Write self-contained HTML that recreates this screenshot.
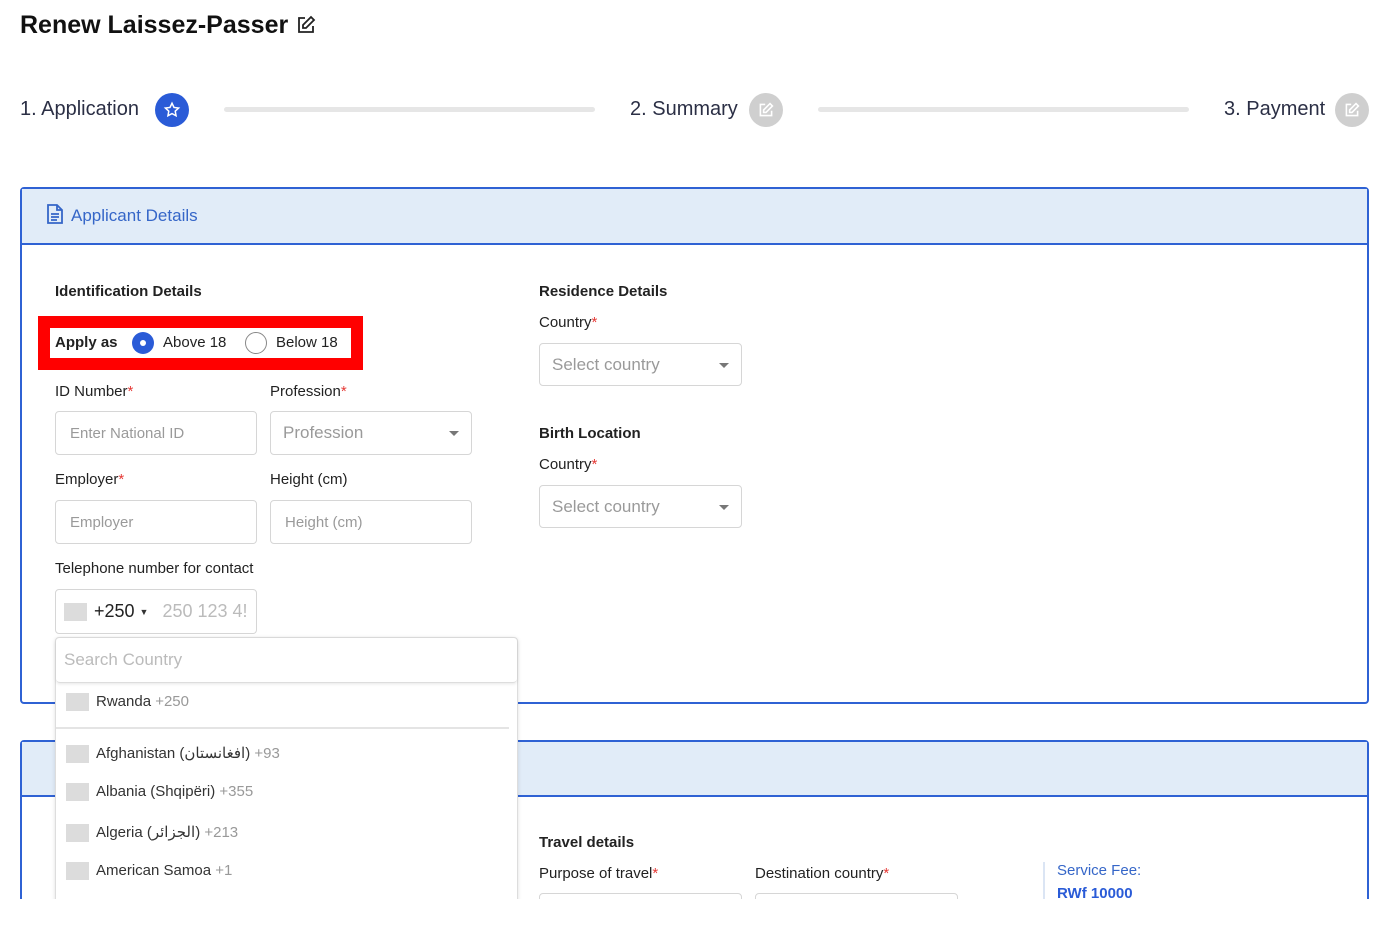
<!DOCTYPE html>
<html><head><meta charset="utf-8"><style>
*{box-sizing:border-box;margin:0;padding:0}
html,body{width:1387px;height:938px;overflow:hidden}
body{background:#fff;font-family:"Liberation Sans","Noto Sans CJK SC",sans-serif;color:#222;position:relative}
.a{position:absolute;white-space:nowrap}
.lbl{font-size:15px;color:#222}
.req{color:#e53935}
.inp{position:absolute;border:1px solid #d6d6d6;border-radius:4px;background:#fff;font-size:15px;color:#9a9a9a;padding-left:14px;display:flex;align-items:center}
.sel{font-size:17px;padding-left:12px}
.caret{position:absolute;right:12px;top:50%;margin-top:-2px;border-left:5px solid transparent;border-right:5px solid transparent;border-top:5px solid #777}
.circ{position:absolute;width:34px;height:34px;border-radius:50%;display:flex;align-items:center;justify-content:center}
.step{font-size:20px;color:#2b2f45}
.line{position:absolute;height:5px;background:#e6e6e6;border-radius:3px;top:107px}
.card{position:absolute;left:20px;width:1349px;border:2px solid #2f62d4;border-radius:4px;background:#fff}
.hdr{background:#e1ecf8;border-bottom:2px solid #2f62d4}
.flag{display:inline-block;width:23px;height:18px;background:#dcdcdc;vertical-align:middle;margin-right:7px}
.row{position:absolute;left:66px;font-size:15px;color:#333}
.row span{color:#999}
.b{font-weight:bold;font-size:15px}
</style></head><body>
<div class="a" style="left:20px;top:11px;font-size:25px;font-weight:bold;color:#111">Renew Laissez-Passer</div>
<svg class="a" style="left:296px;top:15px" width="20" height="20" viewBox="0 0 20 20" fill="none" stroke="#222" stroke-width="1.8"><path d="M9 3H3v14h14v-6"/><path d="M15 2l3 3-8 8H7v-3z"/></svg>

<div class="a step" style="left:20px;top:98px">1. Application</div>
<div class="circ" style="left:155px;top:93px;background:#2a5bd7"><svg width="18" height="18" viewBox="0 0 24 24" fill="none" stroke="#fff" stroke-width="2"><path d="M12 3l2.7 5.6 6.1.8-4.5 4.2 1.1 6.1L12 16.8 6.6 19.7l1.1-6.1L3.2 9.4l6.1-.8z"/></svg></div>
<div class="line" style="left:224px;width:371px"></div>
<div class="a step" style="left:630px;top:98px">2. Summary</div>
<div class="circ" style="left:749px;top:93px;background:#cfcfcf"><svg width="16" height="16" viewBox="0 0 20 20" fill="none" stroke="#fff" stroke-width="2"><path d="M9 3H3v14h14v-6"/><path d="M15 2l3 3-8 8H7v-3z"/></svg></div>
<div class="line" style="left:818px;width:371px"></div>
<div class="a step" style="left:1224px;top:98px">3. Payment</div>
<div class="circ" style="left:1335px;top:93px;background:#cfcfcf"><svg width="16" height="16" viewBox="0 0 20 20" fill="none" stroke="#fff" stroke-width="2"><path d="M9 3H3v14h14v-6"/><path d="M15 2l3 3-8 8H7v-3z"/></svg></div>

<div class="card" style="top:187px;height:517px">
 <div class="hdr" style="height:56px"></div>
</div>
<svg class="a" style="left:46px;top:204px" width="18" height="20" viewBox="0 0 18 20" fill="none" stroke="#3566c8" stroke-width="1.8"><path d="M2 1h9l5 5v13H2z"/><path d="M11 1v5h5M5 10h8M5 13h8M5 16h6"/></svg>
<div class="a" style="left:71px;top:206px;font-size:17px;color:#3566c8">Applicant Details</div>

<div class="a b" style="left:55px;top:283px">Identification Details</div>
<div class="a" style="left:38px;top:316px;width:325px;height:54px;background:#f00"></div>
<div class="a" style="left:50px;top:328px;width:301px;height:30px;background:#fff"></div>
<div class="a b" style="left:55px;top:334px">Apply as</div>
<div class="a" style="left:132px;top:332px;width:22px;height:22px;border-radius:50%;background:#2a5bd7"><div style="margin:8px;width:6px;height:6px;border-radius:50%;background:#fff"></div></div>
<div class="a lbl" style="left:163px;top:334px">Above 18</div>
<div class="a" style="left:245px;top:332px;width:22px;height:22px;border-radius:50%;border:1px solid #888"></div>
<div class="a lbl" style="left:276px;top:334px">Below 18</div>

<div class="a lbl" style="left:55px;top:383px">ID Number<span class="req">*</span></div>
<div class="a lbl" style="left:270px;top:383px">Profession<span class="req">*</span></div>
<div class="inp" style="left:55px;top:411px;width:202px;height:44px">Enter National ID</div>
<div class="inp sel" style="left:270px;top:411px;width:202px;height:44px">Profession<div class="caret"></div></div>
<div class="a lbl" style="left:55px;top:471px">Employer<span class="req">*</span></div>
<div class="a lbl" style="left:270px;top:471px">Height (cm)</div>
<div class="inp" style="left:55px;top:500px;width:202px;height:44px">Employer</div>
<div class="inp" style="left:270px;top:500px;width:202px;height:44px">Height (cm)</div>
<div class="a lbl" style="left:55px;top:560px">Telephone number for contact</div>
<div class="inp" style="left:55px;top:589px;width:202px;height:45px;padding-left:8px;font-size:18px;overflow:hidden"><span class="flag"></span><span style="color:#222">+250</span><span style="font-size:9px;color:#333;margin:0 14px 0 5px">▼</span><span style="color:#bbb">250 123 4!</span></div>

<div class="a lbl b" style="left:539px;top:283px">Residence Details</div>
<div class="a lbl" style="left:539px;top:314px">Country<span class="req">*</span></div>
<div class="inp sel" style="left:539px;top:343px;width:203px;height:43px">Select country<div class="caret"></div></div>
<div class="a lbl b" style="left:539px;top:425px">Birth Location</div>
<div class="a lbl" style="left:539px;top:456px">Country<span class="req">*</span></div>
<div class="inp sel" style="left:539px;top:485px;width:203px;height:43px">Select country<div class="caret"></div></div>

<div class="card" style="top:740px;height:198px">
 <div class="hdr" style="height:55px"></div>
</div>
<div class="a lbl b" style="left:539px;top:834px">Travel details</div>
<div class="a lbl" style="left:539px;top:865px">Purpose of travel<span class="req">*</span></div>
<div class="a lbl" style="left:755px;top:865px">Destination country<span class="req">*</span></div>
<div class="a" style="left:539px;top:893px;width:203px;height:20px;border:1px solid #d6d6d6;border-radius:4px"></div>
<div class="a" style="left:755px;top:893px;width:203px;height:20px;border:1px solid #d6d6d6;border-radius:4px"></div>
<div class="a" style="left:1043px;top:862px;width:2px;height:40px;background:#dbe5f4"></div>
<div class="a" style="left:1057px;top:862px;font-size:15px;color:#3566c8">Service Fee:</div>
<div class="a" style="left:1057px;top:885px;font-size:15px;font-weight:bold;color:#2a5bd7">RWf 10000</div>

<div class="a" style="left:55px;top:637px;width:463px;height:300px;border:1px solid #ddd;border-radius:4px;background:#fff;box-shadow:0 1px 4px rgba(0,0,0,.12)">
 <div style="height:45px;border-bottom:1px solid #ddd;border-radius:4px;box-shadow:0 1px 3px rgba(0,0,0,.1);font-size:17px;color:#bbb;padding:12px 0 0 8px">Search Country</div>
 <div style="position:absolute;left:0;right:8px;top:89px;height:2px;background:#e4e4e4"></div>
</div>
<div class="row" style="top:693px"><i class="flag"></i>Rwanda <span>+250</span></div>
<div class="row" style="top:744px"><i class="flag"></i>Afghanistan (افغانستان‎) <span>+93</span></div>
<div class="row" style="top:783px"><i class="flag"></i>Albania (Shqipëri) <span>+355</span></div>
<div class="row" style="top:823px"><i class="flag"></i>Algeria (الجزائر‎) <span>+213</span></div>
<div class="row" style="top:862px"><i class="flag"></i>American Samoa <span>+1</span></div>
<div class="a" style="left:0;top:899px;width:1387px;height:39px;background:#fff"></div>
</body></html>
